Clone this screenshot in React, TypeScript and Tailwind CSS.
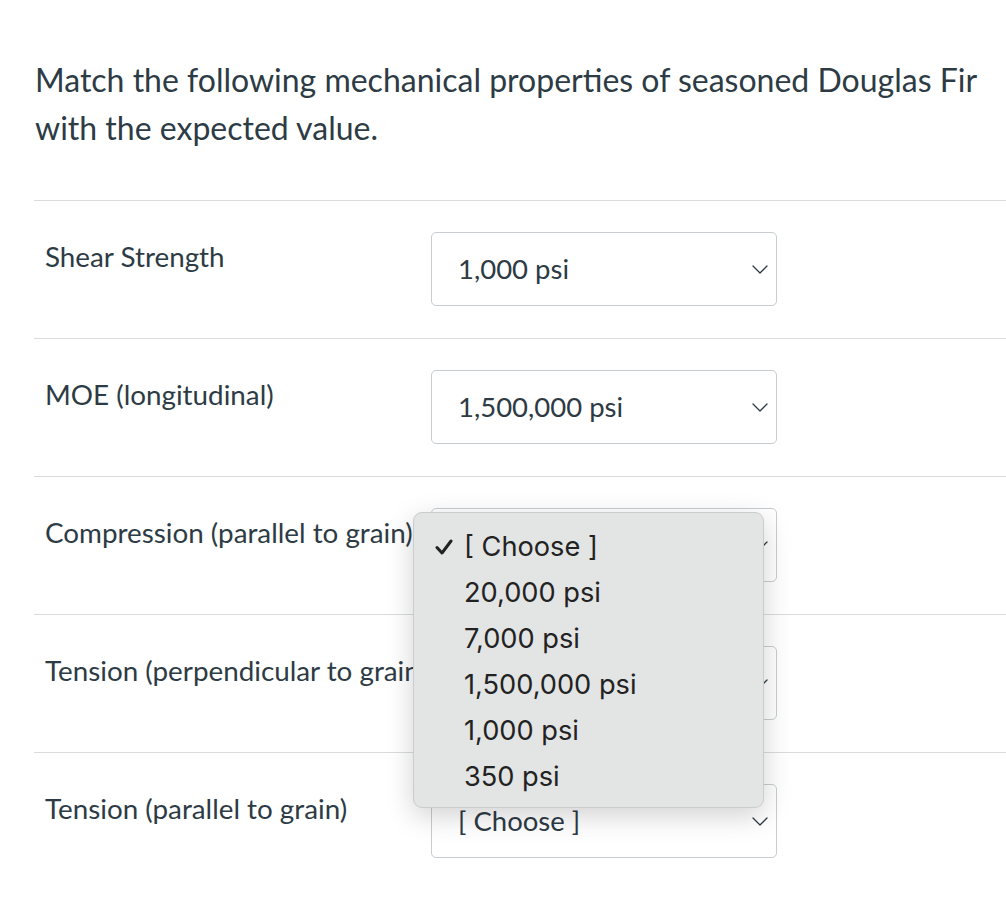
import React from 'react';

const rows = [
  { label: 'Shear Strength', value: '1,000 psi' },
  { label: 'MOE (longitudinal)', value: '1,500,000 psi' },
  { label: 'Compression (parallel to grain)', value: '[ Choose ]' },
  { label: 'Tension (perpendicular to grain)', value: '[ Choose ]' },
  { label: 'Tension (parallel to grain)', value: '[ Choose ]' },
];

const options = ['[ Choose ]', '20,000 psi', '7,000 psi', '1,500,000 psi', '1,000 psi', '350 psi'];

function Chevron() {
  return (
    <svg width="16" height="9" viewBox="0 0 16 9" fill="none">
      <path d="M1 1l7 7 7-7" stroke="#2d3b45" strokeWidth="1.3" strokeLinecap="round" strokeLinejoin="round" />
    </svg>
  );
}

function Check() {
  return (
    <svg width="18" height="16" viewBox="0 0 18 16" fill="none">
      <path d="M2 8.5l5 5.5L16 2" stroke="#222" strokeWidth="3" strokeLinecap="round" strokeLinejoin="round" />
    </svg>
  );
}

export default function App() {
  return (
    <div className="relative w-[1006px] h-[918px] overflow-hidden bg-white font-['Lato',sans-serif] text-[#2d3b45]">
      <p className="pt-[56px] pl-[35px] pr-[8px] text-[32px] leading-[48px]">
        Match the following mechanical properties of seasoned Douglas Fir with the expected value.
      </p>

      <div className="mt-[48px] ml-[34px]">
        {rows.map((row) => (
          <div key={row.label} className="flex items-start border-t border-[#d9dcdf] pt-[31px] pb-[32px]">
            <div className="w-[397px] shrink-0 pl-[11px] pt-[8px] text-[27.8px] leading-[34px] whitespace-nowrap">
              {row.label}
            </div>
            <div className="flex h-[74px] w-[346px] items-center justify-between rounded-[5px] border border-[#c7cdd1] bg-white pl-[26px] pr-[8px]">
              <span className="text-[27.5px]">{row.value}</span>
              <Chevron />
            </div>
          </div>
        ))}
      </div>

      <div className="absolute left-[413px] top-[512px] w-[351px] h-[296px] rounded-[9px] border border-[#cbcccc] bg-[#e3e4e4] pt-[11px] shadow-[0_8px_28px_rgba(0,0,0,0.18)] font-['Inter',sans-serif] text-[#222]">
        {options.map((opt, i) => (
          <div key={opt} className="flex h-[46px] items-center">
            <div className="flex w-[50px] justify-end pr-[11px]">{i === 0 && <Check />}</div>
            <span className="text-[27.2px]">{opt}</span>
          </div>
        ))}
      </div>
    </div>
  );
}
